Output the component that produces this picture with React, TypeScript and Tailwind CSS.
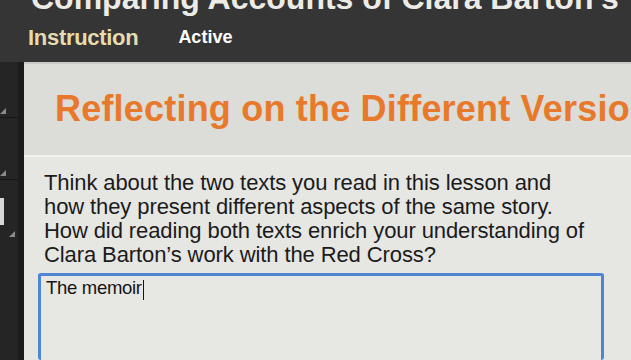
export default function App() {
  const grip = (
    <svg width="6" height="6" viewBox="0 0 6 6" className="self-end mr-[3px] mb-[3px]">
      <path d="M6 0 L6 6 L0 6 Z" fill="#8a8a8a" />
    </svg>
  );

  return (
    <div
      className="w-[631px] h-[360px] overflow-hidden bg-[#353535] flex flex-col"
      style={{ fontFamily: '"Liberation Sans", Arial, sans-serif' }}
    >
      {/* page title, mostly scrolled off */}
      <div className="h-[16px] overflow-hidden shrink-0">
        <div className="mt-[-19px] ml-[31px] text-[32px] font-bold text-[#ecebe6] whitespace-nowrap leading-[34px]">
          Comparing Accounts of Clara Barton's
        </div>
      </div>

      {/* tabs */}
      <div className="h-[46px] shrink-0 flex items-center gap-[40px] pl-[28px] pb-[4px]">
        <span className="text-[22px] font-bold text-[#e6dcae] tracking-[-0.3px]">Instruction</span>
        <span className="text-[18px] font-bold text-white">Active</span>
      </div>

      <div className="flex flex-1 min-h-0">
        {/* left strip */}
        <div className="w-[18px] shrink-0 bg-[#252525] flex flex-col">
          <div className="h-[56px] flex border-b border-[#161616]">{grip}</div>
          <div className="h-[62px] flex border-b border-[#161616]">{grip}</div>
          <div className="h-[60px] flex flex-col justify-between">
            <div className="mt-[18px] w-[4px] h-[27px] bg-[#d8d8d8]" />
            {grip}
          </div>
          <div className="flex-1" />
        </div>
        <div className="w-[6px] shrink-0 bg-[#1c1c1c]" />

        {/* content panel */}
        <div className="flex-1 min-w-0 bg-[#e6e6e3] flex flex-col">
          <div className="h-[95px] shrink-0 bg-[#dcdcd8] border-t-2 border-[#c9c9c6] border-b-2 border-b-[#f2f2ef] flex items-center pl-[31px] overflow-hidden">
            <h1 className="text-[36px] font-bold text-[#e8792a] whitespace-nowrap leading-none tracking-[0.2px] mt-[-2px]">
              Reflecting on the Different Versions
            </h1>
          </div>

          <p className="pl-[20px] pt-[14px] text-[22px] leading-[24px] text-[#1b1b1b] whitespace-nowrap tracking-[-0.1px]">
            Think about the two texts you read in this lesson and
            <br />
            how they present different aspects of the same story.
            <br />
            How did reading both texts enrich your understanding of
            <br />
            Clara Barton’s work with the Red Cross?
          </p>

          <div className="ml-[14px] mt-[6px] w-[566px] flex-1 rounded-[3px] border-[3px] border-b-0 border-[#4f86d4] bg-[#e7e7e4] px-[5px] pt-[1px] leading-[22px]">
            <span className="text-[18.5px] text-[#151515] tracking-[-0.3px]">The memoir</span>
            <span className="inline-block w-[1px] h-[20px] bg-[#151515] align-middle ml-[1px]" />
          </div>
        </div>
      </div>
    </div>
  );
}
